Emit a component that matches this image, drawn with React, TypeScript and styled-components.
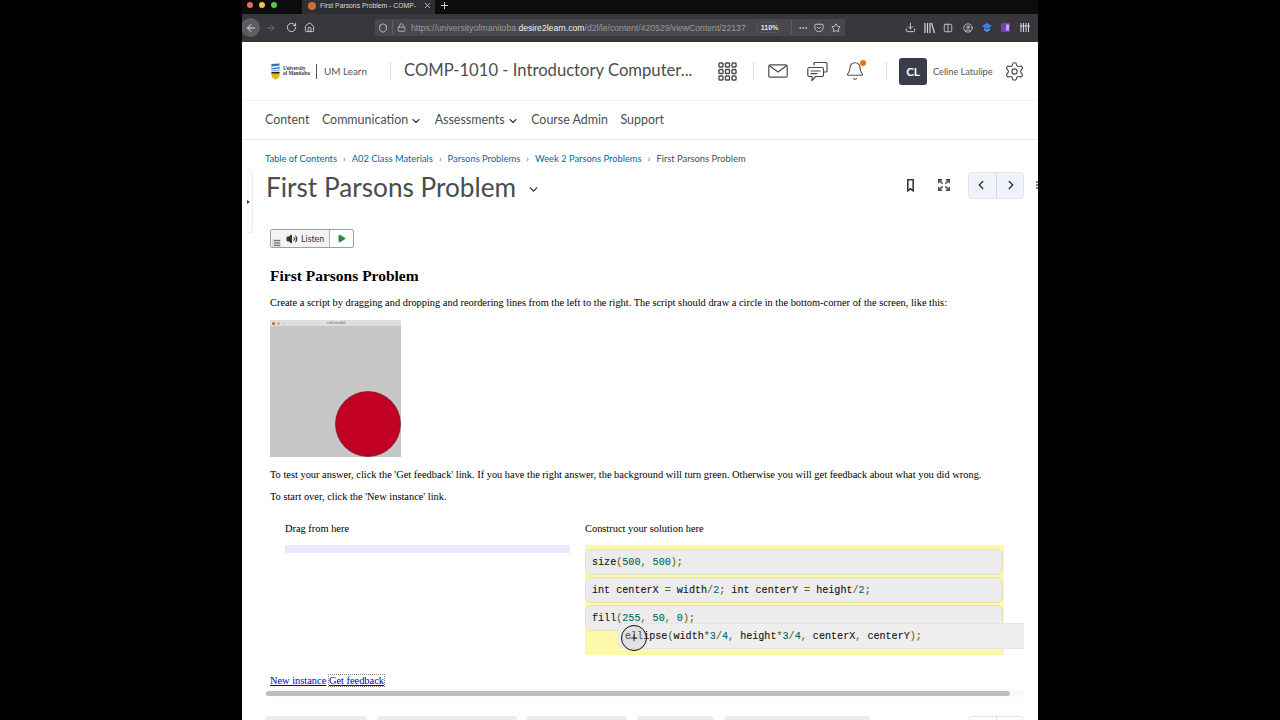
import React from "react";
import styled, { createGlobalStyle } from "styled-components";
import {
  ArrowLeft, ArrowRight, RotateCw, Home, Shield, Lock, MoreHorizontal, Star, Download, X, Plus,
  Bell, Settings, ChevronDown, ChevronLeft, ChevronRight, Expand, Volume2, Play, Menu, CircleUser, Columns2, Pocket,
} from "lucide-react";

const Global = createGlobalStyle`
  html, body { margin: 0; padding: 0; background: #000; height: 720px; overflow: hidden; }
  #root { height: 720px; }
`;

const Screen = styled.div`
  width: 1280px; height: 720px; background: #000; display: flex; justify-content: flex-start; padding-left: 242px; box-sizing: border-box;
`;
const Page = styled.div`
  width: 796px; height: 720px; background: #fff; overflow: hidden; display: flex; flex-direction: column; position: relative;
  font-family: "Lato", sans-serif; color: #494c4e;
`;

const TabStrip = styled.div`
  height: 14px; background: #0c0c0d; display: flex; align-items: flex-start; flex: none; padding-left: 5px;
`;
const Light = styled.span<{ $c: string }>`
  width: 6px; height: 6px; border-radius: 50%; background: ${p => p.$c}; margin: 2px 6px 0 0; flex: none;
`;
const Tab = styled.div`
  margin-left: 19px; width: 133px; height: 14px; background: #2f2f33; display: flex; align-items: center; padding: 0 0 3px 6px; box-sizing: border-box;
  color: #d8d8da; font: 6.8px "Liberation Sans", sans-serif; gap: 4px; white-space: nowrap;
  svg { margin-left: 3px; flex: none; }
`;
const Favicon = styled.span`
  width: 8px; height: 8px; border-radius: 50%; background: #c8703c; flex: none;
`;
const NewTab = styled.span`
  display: flex; margin: 0 0 0 4px; color: #ddd;
`;
const Toolbar = styled.div`
  height: 27px; background: #38383c; border-bottom: 1px solid #4d2a1e; display: flex; align-items: center; flex: none; color: #d4d4d6;
`;
const BackCircle = styled.span`
  width: 19px; height: 19px; margin-left: -1px; border-radius: 50%; background: #5d5d61; display: flex; align-items: center; justify-content: center; color: #e4e4e4; flex: none;
`;
const ToolButton = styled.span<{ $w?: number; $dim?: boolean }>`
  width: ${p => p.$w ?? 19}px; display: flex; justify-content: center; flex: none; color: ${p => (p.$dim ? "#7a7a7d" : "#d8d8da")};
`;
const UrlBar = styled.div`
  margin-left: 57px; width: 470px; height: 17px; background: #48484c; border-radius: 2px; display: flex; align-items: center; flex: none; padding-left: 2px; box-sizing: border-box; color: #c8c8ca;
`;
const UrlDivider = styled.span`
  width: 1px; height: 13px; background: #606064; margin: 0 4px; flex: none;
`;
const UrlText = styled.span`
  font: 8.65px "Liberation Sans", sans-serif; color: #98989b; margin-left: 5px; width: 340px; white-space: nowrap; flex: none;
  b { color: #f0f0f0; font-weight: 400; }
`;
const Zoom = styled.span`
  font: 700 7px "Liberation Sans", sans-serif; color: #e4e4e4; border: 1px solid #555559; border-radius: 7px; box-sizing: border-box; width: 27px; text-align: center; padding: 1px 0; margin-right: 4px; margin-left: 5px; flex: none;
`;
const ExtBox = styled.div`
  display: flex; align-items: center; margin-left: 56px; gap: 1.2px;
`;
const Ext = styled.span`
  width: 18px; display: flex; justify-content: center; color: #d4d4d6;
`;

const Header = styled.header`
  height: 58px; display: flex; align-items: center; flex: none; padding-left: 29px; box-sizing: border-box;
`;
const LogoBox = styled.div`
  display: flex; align-items: center; width: 119px; flex: none;
`;
const LogoWords = styled.span`
  font: 700 5.1px/5.2px "Liberation Serif", serif; color: #333; width: 26px; margin: 0 7px 0 3px; white-space: nowrap; flex: none;
`;
const LogoBar = styled.span`
  width: 1px; height: 15px; background: #555; flex: none;
`;
const LogoName = styled.span`
  font-size: 9.9px; color: #555; margin-left: 7px; white-space: nowrap;
`;
const Dots = styled.span`
  width: 0; height: 16px; border-left: 1px dotted #c4c4c4; flex: none;
`;
const CourseTitle = styled.span`
  font-size: 16.65px; color: #4b4e50; margin: 0 0 3px 13px; width: 314px; white-space: nowrap; flex: none;
`;
const GridWrap = styled.span`
  width: 19px; display: flex; margin-right: 16px; flex: none;
`;
const HeadIcon = styled.span<{ $w: number }>`
  width: ${p => p.$w}px; display: flex; justify-content: center; flex: none; color: #494c4e; position: relative;
`;
const Notif = styled.span`
  position: absolute; right: 12px; top: -1px; width: 6px; height: 6px; border-radius: 50%; background: #e87511;
`;
const BellGap = styled.span`
  width: 8px; flex: none;
`;
const Avatar = styled.span`
  width: 28px; height: 27px; border-radius: 3px; background: #383d47; color: #fff; font-weight: 700; font-size: 11.5px; display: flex; align-items: center; justify-content: center; margin-left: 12px; flex: none;
`;
const UserName = styled.span`
  font-size: 9.2px; color: #555; margin-left: 6px; width: 60px; white-space: nowrap; flex: none;
`;

const Nav = styled.nav`
  height: 40px; box-sizing: border-box; border-top: 1px solid #f2f2f3; border-bottom: 1px solid #e9e9ea; display: flex; align-items: center; padding: 0 0 1px 23px; gap: 12.5px; flex: none;
  font-size: 12.45px; color: #4c4f51;
`;
const NavItem = styled.span`
  display: flex; align-items: center; gap: 2px; white-space: nowrap;
  svg { color: #333; margin-top: 2px; }
`;

const Main = styled.div`
  flex: 1; position: relative; padding: 11px 0 0 23px; min-height: 0;
`;
const SideHandle = styled.span`
  position: absolute; left: 4px; top: 30px; width: 7px; height: 63px; box-sizing: border-box; border: 1px solid #eeeeef; border-left: none; border-radius: 0 3px 3px 0; display: flex; align-items: center; background: #fcfcfc;
  &::after { content: ""; border-left: 3px solid #444; border-top: 2.5px solid transparent; border-bottom: 2.5px solid transparent; margin-left: 1px; }
`;
const Crumbs = styled.div`
  display: flex; align-items: center; height: 14px; font-size: 9.35px; white-space: nowrap; color: #4c4f51;
`;
const Crumb = styled.span`
  color: #006b9e;
`;
const CrumbSep = styled.span`
  width: 14.8px; display: flex; justify-content: center; color: #666;
`;
const TitleRow = styled.div`
  display: flex; align-items: center; height: 37px; margin-top: 3px;
`;
const PageTitle = styled.h1`
  font-size: 26.2px; font-weight: 400; color: #494c4e; margin: 0 0 0 1px; white-space: nowrap;
`;
const TitleChevron = styled.span`
  display: flex; margin: 6px 0 0 11px; color: #333;
`;
const TitleActions = styled.div`
  margin: -3px 0 0 auto; display: flex; align-items: center; color: #444;
`;
const ActionIcon = styled.span<{ $w: number; $mr?: number }>`
  width: ${p => p.$w}px; margin-right: ${p => p.$mr ?? 0}px; display: flex; justify-content: center; flex: none;
`;
const Pager = styled.div`
  display: flex; width: 56px; height: 27px; margin-left: 4px; border: 1px solid #e0e4ef; border-radius: 4px; background: #f0f3fa; box-sizing: border-box; flex: none;
`;
const PagerBtn = styled.span`
  flex: 1; display: flex; align-items: center; justify-content: center; color: #33373d; padding-right: 3px;
  & + & { border-left: 1px solid #d4d7de; padding: 0 0 0 2px; }
`;
const EdgeDots = styled.span`
  width: 0; height: 8px; margin-left: 12px; border-left: 2px dotted #8a8a8a; flex: none;
`;

const Topic = styled.div`
  margin: 24px 0 0 5px; font-family: "Liberation Serif", serif; color: #000; font-size: 10.4px;
`;
const Listen = styled.div`
  width: 84px; height: 19px; border: 1px solid #9aa0a6; border-radius: 2px; display: flex; box-sizing: border-box; position: relative; font: 8.8px "Lato", sans-serif; color: #333; background: #fff;
`;
const ListenLabel = styled.span`
  width: 59px; display: flex; align-items: center; padding-left: 15px; box-sizing: border-box; gap: 3px; border-right: 1px solid #b0b4b8; background: #f3f3f3;
`;
const ListenPlay = styled.span`
  flex: 1; display: flex; align-items: center; justify-content: center; color: #2c8a42;
`;
const ListenMenu = styled.span`
  position: absolute; left: 1px; bottom: 0; width: 9px; height: 8px; background: #ddd; color: #222; display: flex; align-items: center; justify-content: center;
`;
const Heading = styled.h2`
  font-size: 15.5px; margin: 18px 0 0; line-height: 20px; font-weight: 700;
`;
const Para = styled.p<{ $top: number }>`
  margin: ${p => p.$top}px 0 0; line-height: 14px; white-space: nowrap; font-size: 10.4px;
`;
const Shot = styled.div`
  width: 131px; height: 137px; margin-top: 10px; background: #c6c6c6; display: flex; flex-direction: column; overflow: hidden; position: relative;
`;
const ShotBar = styled.div`
  height: 6px; background: #dedede; display: flex; align-items: center; padding-left: 2px; gap: 2px; font: 3px "Liberation Sans", sans-serif; color: #666;
`;
const ShotDot = styled.span<{ $c: string }>`
  width: 3px; height: 3px; border-radius: 50%; background: ${p => p.$c};
`;
const ShotTitle = styled.span`
  margin-left: 40px;
`;
const ShotBody = styled.svg`
  display: block; flex: 1;
`;
const Columns = styled.div`
  display: flex; margin: 18px 0 0 15px; position: relative;
`;
const Col = styled.div<{ $w: number }>`
  width: ${p => p.$w}px; flex: none;
`;
const ColLabel = styled.div`
  height: 14px; line-height: 14px; margin-bottom: 9px;
`;
const Source = styled.div`
  width: 285px; height: 8px; background: #e9e7fb;
`;
const Target = styled.div`
  width: 419px; height: 110px; background: #fdf9a9; padding: 4px 1px 0 0; box-sizing: border-box; display: flex; flex-direction: column; gap: 2px;
`;
const CodeBlock = styled.div`
  height: 26px; border: 1px solid #e6e4b0; border-radius: 6px; background: #ececec; box-sizing: border-box; padding-left: 6px; display: flex; align-items: center;
  font: 10.1px "Liberation Mono", monospace; white-space: pre; color: #111; -webkit-text-stroke: 0.1px #111;
`;
const Floating = styled(CodeBlock)`
  position: absolute; left: 333px; top: 101px; width: 406px; border-color: #e5e5e5; border-right: none; border-radius: 6px 0 0 6px; background: #eeeeee;
`;
const Num = styled.span`
  color: #066; -webkit-text-stroke: 0.1px #066;
`;
const Pun = styled.span`
  color: #660; -webkit-text-stroke: 0.1px #660;
`;
const Cursor = styled.span`
  position: absolute; left: 336px; top: 103px; width: 26px; height: 26px; border: 1.5px solid #111; border-radius: 50%; box-sizing: border-box; background: rgba(200,200,200,.35); display: flex; align-items: center; justify-content: center;
`;
const Links = styled.div`
  margin-top: 19px; height: 14px; line-height: 14px; white-space: pre;
  a { color: #0000c8; text-decoration: underline; }
`;
const Focused = styled.a`
  outline: 1px dotted #888;
`;
const ScrollTrack = styled.div`
  margin: 1px 0 0 -4px; width: 758px; height: 8px; background: #f9f9f9; display: flex; align-items: center;
`;
const ScrollThumb = styled.div`
  width: 744px; height: 5px; border-radius: 3px; background: #bfbfbf;
`;
const BottomRow = styled.div`
  display: flex; gap: 10px; margin-top: 19px; align-items: flex-start;
`;
const Chip = styled.span<{ $w: number }>`
  width: ${p => p.$w}px; height: 12px; border-radius: 4px 4px 0 0; background: #e8ebf4; flex: none;
`;
const BottomPager = styled.div`
  margin-left: 88px; width: 56px; height: 12px; border: 1px solid #e0e4ef; border-radius: 4px 4px 0 0; box-sizing: border-box; display: flex; flex: none;
  &::after { content: ""; width: 1px; background: #d4d7de; margin-left: 27px; }
`;

function GridIcon() {
  const cells = [0, 1, 2].flatMap(y => [0, 1, 2].map(x => [x, y]));
  return (
    <svg width="19" height="19" viewBox="0 0 19 19" fill="none" stroke="#494c4e" strokeWidth="1.4">
      {cells.map(([x, y]) => <rect key={`${x}-${y}`} x={1 + x * 6.5} y={1 + y * 6.5} width="4" height="4" rx="0.8" />)}
    </svg>
  );
}
function MailIcon() {
  return (
    <svg width="20" height="14" viewBox="0 0 20 14" fill="none" stroke="#494c4e" strokeWidth="1.2" strokeLinejoin="round">
      <rect x="0.8" y="0.8" width="18.400" height="12.400" rx="1.500" />
      <path d="M1.200 1.500 10 8l8.800-6.500" />
    </svg>
  );
}
function ChatIcon() {
  return (
    <svg width="21" height="21" viewBox="0 0 21 21" fill="none" stroke="#494c4e" strokeWidth="1.2" strokeLinejoin="round" strokeLinecap="round">
      <path d="M7 4V2.500a1 1 0 0 1 1-1h11a1 1 0 0 1 1 1V10a1 1 0 0 1-1 1h-1.500" />
      <path d="M2 6.500h13a1.500 1.500 0 0 1 1.500 1.500v6a1.500 1.500 0 0 1-1.500 1.500H8.500L5 19.500v-4H2A1.500 1.500 0 0 1 .8 14V8A1.500 1.500 0 0 1 2 6.500Z" />
      <path d="M4 10h9M4 12.600h6" />
    </svg>
  );
}
function BookmarkIcon() {
  return (
    <svg width="7" height="13" viewBox="0 0 7 13" fill="none" stroke="#3a3a3c" strokeWidth="1.6" strokeLinejoin="miter">
      <path d="M.8.8h5.400v11L3.500 9.800.8 11.800Z" />
    </svg>
  );
}
function Shield2() {
  return (
    <svg width="9" height="17" viewBox="0 0 9 17" style={{ flex: "none" }}>
      <path d="M.5 1 8.500.5v7L.5 8Z" fill="#2a6fae" />
      <path d="M.5 3.500 8.500 2.500v1.500L.5 5.500ZM.5 6.500l8-1v1.200l-8 1Z" fill="#f2f2f2" />
      <path d="M.5 8.500h8v3.500c0 2.500-2 4-4 4.500-2-.5-4-2-4-4.500Z" fill="#e3b51c" />
      <path d="M.5 9h8v1.500h-8Z" fill="#222" />
    </svg>
  );
}

export default function App() {
  return (
    <>
      <Global />
      <Screen>
        <Page>
          <TabStrip>
            <Light $c="#ec6a5e" /><Light $c="#f4bf4f" /><Light $c="#61c554" />
            <Tab>
              <Favicon />
              <span>First Parsons Problem - COMP-</span>
              <X size={9} />
            </Tab>
            <NewTab><Plus size={11} /></NewTab>
          </TabStrip>
          <Toolbar>
            <BackCircle><ArrowLeft size={12} /></BackCircle>
            <ToolButton $dim $w={22}><ArrowRight size={10} /></ToolButton>
            <ToolButton $w={18}><RotateCw size={11} /></ToolButton>
            <ToolButton $w={18}><Home size={11} /></ToolButton>
            <UrlBar>
              <ToolButton $w={11}><Shield size={10} /></ToolButton>
              <UrlDivider />
              <Lock size={9} />
              <UrlText>https://universityofmanitoba.<b>desire2learn.com</b>/d2l/le/content/420529/viewContent/22137</UrlText>
              <Zoom>110%</Zoom>
              <UrlDivider />
              <ToolButton $w={14}><MoreHorizontal size={10} /></ToolButton>
              <ToolButton $w={18}><Pocket size={10} /></ToolButton>
              <ToolButton $w={16}><Star size={10} /></ToolButton>
            </UrlBar>
            <ExtBox>
              <Ext><Download size={11} /></Ext>
              <Ext><svg width="11" height="10" viewBox="0 0 11 10" fill="none" stroke="currentColor" strokeWidth="1.2"><path d="M1 0v10M3.500 0v10M6 0v10M7.500 0l3 10" /></svg></Ext>
              <Ext><Columns2 size={10} /></Ext>
              <Ext><CircleUser size={10} /></Ext>
              <Ext><svg width="10" height="9" viewBox="0 0 10 9"><path d="M5 0 10 3 5 6 0 3Z" fill="#3b82e6" /><path d="M2 5v2l3 2 3-2V5L5 7Z" fill="#5aa0f0" /></svg></Ext>
              <Ext><svg width="9" height="9" viewBox="0 0 9 9"><rect width="9" height="9" rx="1" fill="#7b3ac2" /><path d="M5 1.500h3v6H5Z" fill="#c9a4ee" /></svg></Ext>
              <Ext><svg width="10" height="9" viewBox="0 0 10 9" fill="none" stroke="currentColor" strokeWidth="1"><path d="M1 0v9M3.500 0v9M6 0v9M8.500 0v9M0 3h10" /></svg></Ext>
            </ExtBox>
          </Toolbar>

          <Header>
            <LogoBox>
              <Shield2 />
              <LogoWords>University<br />of Manitoba</LogoWords>
              <LogoBar />
              <LogoName>UM Learn</LogoName>
            </LogoBox>
            <Dots />
            <CourseTitle>COMP-1010 - Introductory Computer...</CourseTitle>
            <GridWrap><GridIcon /></GridWrap>
            <Dots />
            <HeadIcon $w={48}><MailIcon /></HeadIcon>
            <HeadIcon $w={30}><ChatIcon /></HeadIcon>
            <HeadIcon $w={46}><Bell size={20} strokeWidth={1.3} /><Notif /></HeadIcon>
            <BellGap />
            <Dots />
            <Avatar>CL</Avatar>
            <UserName>Celine Latulipe</UserName>
            <HeadIcon $w={42}><Settings size={21} strokeWidth={1.3} /></HeadIcon>
          </Header>

          <Nav>
            <NavItem>Content</NavItem>
            <NavItem>Communication<ChevronDown size={12} strokeWidth={2.2} /></NavItem>
            <NavItem>Assessments<ChevronDown size={12} strokeWidth={2.2} /></NavItem>
            <NavItem>Course Admin</NavItem>
            <NavItem>Support</NavItem>
          </Nav>

          <Main>
            <SideHandle />
            <Crumbs>
              <Crumb>Table of Contents</Crumb><CrumbSep>›</CrumbSep>
              <Crumb>A02 Class Materials</Crumb><CrumbSep>›</CrumbSep>
              <Crumb>Parsons Problems</Crumb><CrumbSep>›</CrumbSep>
              <Crumb>Week 2 Parsons Problems</Crumb><CrumbSep>›</CrumbSep>
              <span>First Parsons Problem</span>
            </Crumbs>
            <TitleRow>
              <PageTitle>First Parsons Problem</PageTitle>
              <TitleChevron><ChevronDown size={13} strokeWidth={2.5} /></TitleChevron>
              <TitleActions>
                <ActionIcon $w={14} $mr={6.5}><BookmarkIcon /></ActionIcon>
                <ActionIcon $w={40}><Expand size={14} strokeWidth={2.4} /></ActionIcon>
                <Pager>
                  <PagerBtn><ChevronLeft size={14} strokeWidth={2.5} /></PagerBtn>
                  <PagerBtn><ChevronRight size={14} strokeWidth={2.5} /></PagerBtn>
                </Pager>
                <EdgeDots />
              </TitleActions>
            </TitleRow>

            <Topic>
              <Listen>
                <ListenLabel><Volume2 size={12} fill="#333" />Listen</ListenLabel>
                <ListenPlay><Play size={9} fill="currentColor" /></ListenPlay>
                <ListenMenu><Menu size={8} /></ListenMenu>
              </Listen>
              <Heading>First Parsons Problem</Heading>
              <Para $top={10}>Create a script by dragging and dropping and reordering lines from the left to the right. The script should draw a circle in the bottom-corner of the screen, like this:</Para>
              <Shot>
                <ShotBar>
                  <ShotDot $c="#e8483f" /><ShotDot $c="#e8b13f" /><ShotDot $c="#d0d0d0" />
                  <ShotTitle>redCornerBall</ShotTitle>
                </ShotBar>
                <ShotBody viewBox="0 0 131 131" width="131" height="131">
                  <circle cx="98" cy="98" r="32.500" fill="#c10023" stroke="#5a1020" strokeWidth="0.6" />
                </ShotBody>
              </Shot>
              <Para $top={11}>To test your answer, click the 'Get feedback' link. If you have the right answer, the background will turn green. Otherwise you will get feedback about what you did wrong.</Para>
              <Para $top={8}>To start over, click the 'New instance' link.</Para>
              <Columns>
                <Col $w={300}>
                  <ColLabel>Drag from here</ColLabel>
                  <Source />
                </Col>
                <Col $w={419}>
                  <ColLabel>Construct your solution here</ColLabel>
                  <Target>
                    <CodeBlock>size<Pun>(</Pun><Num>500</Num><Pun>, </Pun><Num>500</Num><Pun>);</Pun></CodeBlock>
                    <CodeBlock>int centerX <Pun>=</Pun> width<Pun>/</Pun><Num>2</Num><Pun>;</Pun> int centerY <Pun>=</Pun> height<Pun>/</Pun><Num>2</Num><Pun>;</Pun></CodeBlock>
                    <CodeBlock>fill<Pun>(</Pun><Num>255</Num><Pun>, </Pun><Num>50</Num><Pun>, </Pun><Num>0</Num><Pun>);</Pun></CodeBlock>
                  </Target>
                </Col>
                <Floating>ellipse<Pun>(</Pun>width<Pun>*</Pun><Num>3</Num><Pun>/</Pun><Num>4</Num><Pun>, </Pun>height<Pun>*</Pun><Num>3</Num><Pun>/</Pun><Num>4</Num><Pun>, </Pun>centerX<Pun>, </Pun>centerY<Pun>);</Pun></Floating>
                <Cursor><Plus size={10} strokeWidth={2} color="#111" /></Cursor>
              </Columns>
              <Links>
                <a href="#new">New instance</a> <Focused href="#get">Get feedback</Focused>
              </Links>
              <ScrollTrack><ScrollThumb /></ScrollTrack>
            </Topic>
            <BottomRow>
              <Chip $w={102} /><Chip $w={140} /><Chip $w={100} /><Chip $w={77} /><Chip $w={146} />
              <BottomPager />
            </BottomRow>
          </Main>
        </Page>
      </Screen>
    </>
  );
}
